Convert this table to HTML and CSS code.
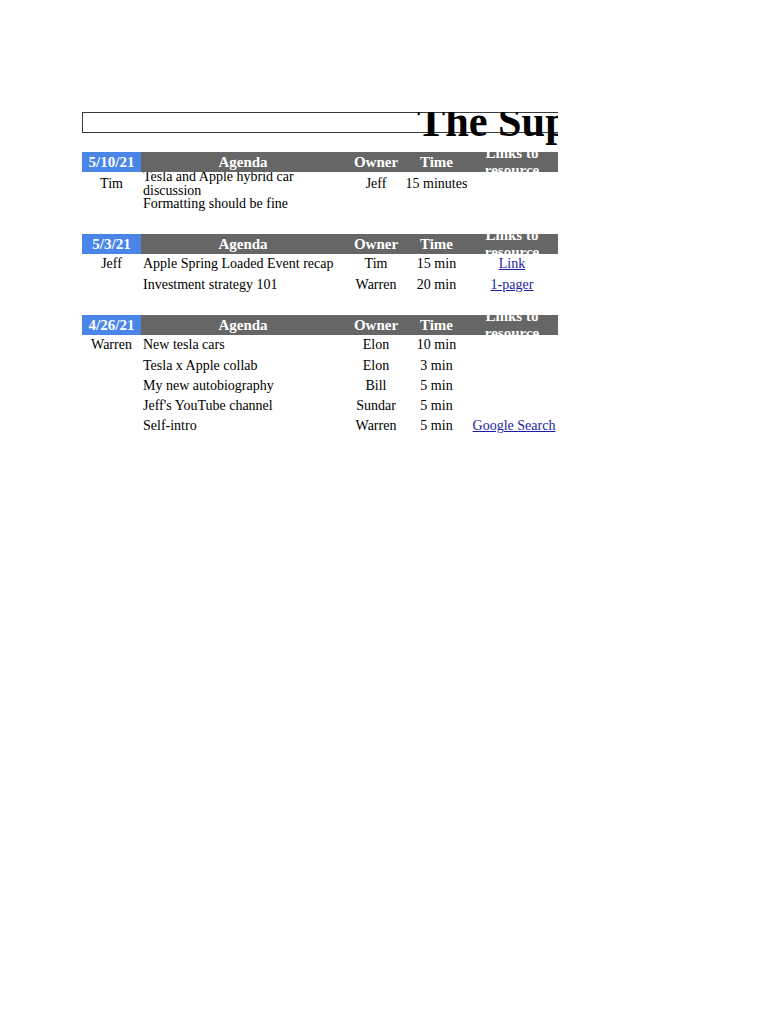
FILE: index.html
```html
<!DOCTYPE html>
<html>
<head>
<meta charset="utf-8">
<link rel="stylesheet" href="styles.css">
</head>
<body>
<div class="page">
  <div class="sheet">
    <div class="title-box"><span class="title">The Super Meeting Agenda</span></div>

    <div class="block">
      <div class="row head">
        <div class="c date">5/10/21</div>
        <div class="c">Agenda</div>
        <div class="c">Owner</div>
        <div class="c">Time</div>
        <div class="c wrap">Links to resource</div>
      </div>
      <div class="row tall">
        <div class="c mid">Tim</div>
        <div class="c left wrap2">Tesla and Apple hybrid car discussion</div>
        <div class="c mid">Jeff</div>
        <div class="c mid">15 minutes</div>
        <div class="c mid"></div>
      </div>
      <div class="row">
        <div class="c mid"></div>
        <div class="c left">Formatting should be fine</div>
        <div class="c mid"></div>
        <div class="c mid"></div>
        <div class="c mid"></div>
      </div>
      <div class="row spacer"></div>
    </div>

    <div class="block">
      <div class="row head">
        <div class="c date">5/3/21</div>
        <div class="c">Agenda</div>
        <div class="c">Owner</div>
        <div class="c">Time</div>
        <div class="c wrap">Links to resource</div>
      </div>
      <div class="row">
        <div class="c mid">Jeff</div>
        <div class="c left">Apple Spring Loaded Event recap</div>
        <div class="c mid">Tim</div>
        <div class="c mid">15 min</div>
        <div class="c mid"><a href="#">Link</a></div>
      </div>
      <div class="row">
        <div class="c mid"></div>
        <div class="c left">Investment strategy 101</div>
        <div class="c mid">Warren</div>
        <div class="c mid">20 min</div>
        <div class="c mid"><a href="#">1-pager</a></div>
      </div>
      <div class="row spacer"></div>
    </div>

    <div class="block">
      <div class="row head">
        <div class="c date">4/26/21</div>
        <div class="c">Agenda</div>
        <div class="c">Owner</div>
        <div class="c">Time</div>
        <div class="c wrap">Links to resource</div>
      </div>
      <div class="row">
        <div class="c mid">Warren</div>
        <div class="c left">New tesla cars</div>
        <div class="c mid">Elon</div>
        <div class="c mid">10 min</div>
        <div class="c mid"></div>
      </div>
      <div class="row">
        <div class="c mid"></div>
        <div class="c left">Tesla x Apple collab</div>
        <div class="c mid">Elon</div>
        <div class="c mid">3 min</div>
        <div class="c mid"></div>
      </div>
      <div class="row">
        <div class="c mid"></div>
        <div class="c left">My new autobiography</div>
        <div class="c mid">Bill</div>
        <div class="c mid">5 min</div>
        <div class="c mid"></div>
      </div>
      <div class="row">
        <div class="c mid"></div>
        <div class="c left">Jeff's YouTube channel</div>
        <div class="c mid">Sundar</div>
        <div class="c mid">5 min</div>
        <div class="c mid"></div>
      </div>
      <div class="row">
        <div class="c mid"></div>
        <div class="c left">Self-intro</div>
        <div class="c mid">Warren</div>
        <div class="c mid">5 min</div>
        <div class="c mid link-wide"><a href="#">Google Search</a></div>
      </div>
    </div>
  </div>
</div>
</body>
</html>
```

FILE: styles.css
```css
html, body {
  margin: 0;
  padding: 0;
  background: #ffffff;
}

body {
  font-family: "Liberation Serif", "Times New Roman", serif;
  color: #000000;
}

.page {
  padding-top: 112px;
  padding-left: 82px;
}

.sheet {
  width: 476px;
  overflow: hidden;
}

.title-box {
  box-sizing: border-box;
  width: 640px;
  height: 21px;
  border: 1px solid #3a3a3a;
  padding-left: 334px;
  font-size: 45px;
  line-height: 16px;
  white-space: nowrap;
  margin-bottom: 19px;
}

.title {
  display: inline-block;
  font-size: 45px;
  font-weight: bold;
  transform: scaleX(0.94);
  transform-origin: left center;
}

.row {
  display: grid;
  grid-template-columns: 59px 204px 62px 59px 92px;
  grid-template-rows: 100%;
  height: 20.3px;
}

.row.tall {
  height: 21.6px;
}

.row.tall .c {
  padding-top: 2px;
}

.row.spacer {
  height: 20.3px;
}

.c {
  display: flex;
  align-items: center;
  justify-content: center;
  text-align: center;
  white-space: nowrap;
  font-size: 14px;
  line-height: 14px;
  min-width: 0;
  min-height: 0;
}

.c.left {
  justify-content: flex-start;
  text-align: left;
  padding-left: 2px;
}

.c.wrap2 {
  white-space: normal;
  line-height: 14px;
}

.head {
  height: 20px;
  background: #666666;
  position: relative;
  z-index: 1;
}

.head .c {
  color: #ffffff;
  font-weight: bold;
  font-size: 15px;
  overflow: hidden;
}

.head .c.wrap {
  white-space: normal;
  line-height: 17px;
}

.head .c.date {
  background: #4a86e8;
}

a {
  color: #1c1ca6;
  text-decoration: underline;
}

.link-wide {
  padding-left: 4px;
}
```
